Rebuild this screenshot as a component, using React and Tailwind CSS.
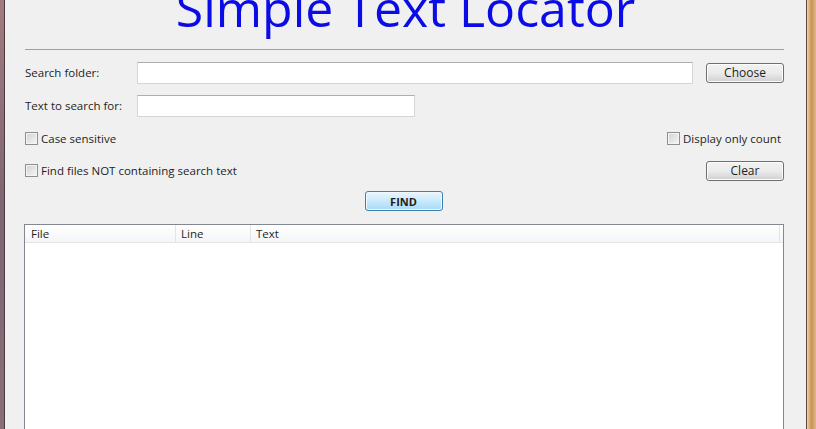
import React from "react";

const uiFont = { fontFamily: '"Open Sans", "Noto Sans", "Liberation Sans", sans-serif' };

function Checkbox({ label }) {
  return (
    <label className="flex items-center gap-[3px] text-[11.5px] text-[#1e1e1e]">
      <span className="w-[13px] h-[13px] border border-[#8e8f8f] bg-gradient-to-br from-[#d2d2d2] to-[#f6f6f6] shadow-[inset_0_0_0_1px_#f4f4f4]" />
      <span>{label}</span>
    </label>
  );
}

function WinButton({ children }) {
  return (
    <button className="block w-[78px] h-[20px] rounded-[3px] border border-[#707070] bg-gradient-to-b from-[#f2f2f2] via-[#ebebeb] to-[#d0d0d0] text-[12px] text-[#1e1e1e] leading-none shadow-[inset_0_0_0_1px_#fcfcfc]">
      {children}
    </button>
  );
}

function TextField({ className }) {
  return (
    <div
      className={`h-[22px] bg-white border border-[#d4d6da] border-t-[#abadb3] ${className}`}
    />
  );
}

export default function App() {
  return (
    <div className="w-[816px] h-[429px] overflow-hidden flex bg-[#f0f0f0]" style={uiFont}>
      {/* left window frame */}
      <div className="w-[4px] bg-gradient-to-b from-[#a27b80] via-[#7d6572] to-[#8a6f7a]" />
      <div className="w-[1px] bg-[#4a3a40]" />

      {/* client area */}
      <div className="flex-1 flex flex-col pl-[20px] pr-[22px]">
        <div className="h-[49px] overflow-hidden flex justify-center">
          <h1 className="text-[#0b0be6] text-[50px] leading-none mt-[-17px] ml-[2px]">
            Simple Text Locator
          </h1>
        </div>
        <div className="h-[1px] bg-[#a0a0a0]" />

        {/* search folder */}
        <div className="mt-[12px] h-[22px] flex items-center">
          <span className="w-[112px] text-[11.5px] text-[#1e1e1e]">Search folder:</span>
          <TextField className="w-[556px]" />
          <div className="ml-auto flex items-center">
            <WinButton>Choose</WinButton>
          </div>
        </div>

        {/* text to search */}
        <div className="mt-[11px] h-[22px] flex items-center">
          <span className="w-[112px] text-[11.5px] text-[#1e1e1e]">Text to search for:</span>
          <TextField className="w-[278px]" />
        </div>

        {/* case sensitive / display only count */}
        <div className="mt-[11px] h-[21px] flex items-center justify-between pr-[3px]">
          <Checkbox label="Case sensitive" />
          <Checkbox label="Display only count" />
        </div>

        {/* NOT containing / clear */}
        <div className="mt-[11px] h-[21px] flex items-center justify-between">
          <Checkbox label="Find files NOT containing search text" />
          <WinButton>Clear</WinButton>
        </div>

        {/* FIND */}
        <div className="mt-[10px] flex justify-center">
          <button className="w-[78px] h-[20px] ml-[-2px] rounded-[3px] border border-[#3c7fb1] bg-gradient-to-b from-[#eaf6fd] via-[#c9eafc] to-[#a7d9f5] text-[11px] font-bold text-[#1e1e1e] leading-none shadow-[inset_0_0_0_1px_#f0fafe]">
            FIND
          </button>
        </div>

        {/* result table */}
        <div className="mt-[13px] flex-1 ml-[-1px] border border-[#828790] border-b-0 bg-white flex flex-col">
          <div className="h-[18px] flex text-[11.5px] text-[#1e1e1e] bg-gradient-to-b from-white to-[#f4f5f7] border-b border-[#e5e5e5]">
            <div className="w-[151px] pl-[6px] border-r border-[#e3e4e6] flex items-center">File</div>
            <div className="w-[75px] pl-[5px] border-r border-[#e3e4e6] flex items-center">Line</div>
            <div className="flex-1 pl-[5px] border-r border-[#e3e4e6] flex items-center">Text</div>
            <div className="w-[3px]" />
          </div>
          <div className="flex-1" />
        </div>
      </div>

      {/* right window frame */}
      <div className="w-[1px] bg-[#5a4a3a]" />
      <div className="w-[9px] bg-gradient-to-r from-[#f2d2a0] via-[#c9935a] to-[#e0b884]" />
    </div>
  );
}
